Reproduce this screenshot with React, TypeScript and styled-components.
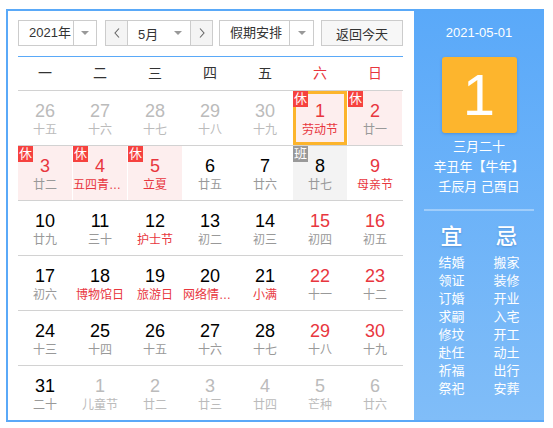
import React from "react";
import styled, { createGlobalStyle, css } from "styled-components";

const RED = "#e8363e";
const GRAY_TEXT = "#999";
const OTHER = "#bbb";

const GlobalStyle = createGlobalStyle`
  html, body { margin: 0; padding: 0; background: #fff; }
  body { font-family: "Liberation Sans", "Noto Sans CJK SC", sans-serif; }
  * { box-sizing: border-box; }
`;

const Widget = styled.div`
  margin: 9px 0 0 6px;
  width: 538px;
  height: 413px;
  display: flex;
  border: 2px solid #5aa9f8;
  border-right: none;
`;

const LeftPanel = styled.div`
  width: 406px;
  padding: 9px 11px 0 10px;
  background: #fff;
`;

const Toolbar = styled.div`
  display: flex;
  height: 26px;
  margin-bottom: 10px;
`;

const Box = styled.div<{ $w: number; $ml?: number; $bg?: string }>`
  display: flex;
  width: ${(p) => p.$w}px;
  margin-left: ${(p) => p.$ml ?? 0}px;
  height: 26px;
  border: 1px solid #ccc;
  background: ${(p) => p.$bg ?? "#fff"};
  font-size: 13px;
  color: #333;
`;

const SelectText = styled.div`
  flex: 1;
  display: flex;
  align-items: center;
  padding-left: 10px;
  line-height: 24px;
  white-space: nowrap;
`;

const ArrowPart = styled.div<{ $w: number }>`
  width: ${(p) => p.$w}px;
  border-left: 1px solid #ccc;
  display: flex;
  align-items: center;
  justify-content: center;
`;

const Caret = styled.span`
  display: inline-block;
  width: 0;
  height: 0;
  border-left: 4px solid transparent;
  border-right: 4px solid transparent;
  border-top: 4px solid #999;
`;

const NavButton = styled.div<{ $side: "left" | "right" }>`
  width: 22px;
  display: flex;
  align-items: center;
  justify-content: center;
  background: #f4f4f4;
  ${(p) =>
    p.$side === "left"
      ? css`border-right: 1px solid #ccc;`
      : css`border-left: 1px solid #ccc;`}
`;

const MonthMid = styled.div`
  flex: 1;
  display: flex;
  align-items: center;
  justify-content: space-between;
  padding: 0 8px 0 10px;
  background: #fff;
`;

const ReturnButton = styled.div`
  width: 82px;
  margin-left: 7px;
  height: 26px;
  border: 1px solid #ccc;
  background: #f7f7f7;
  font-size: 13px;
  color: #333;
  display: flex;
  align-items: center;
  justify-content: center;
`;

const WeekHeader = styled.div`
  display: grid;
  grid-template-columns: repeat(7, 54px);
  column-gap: 1px;
  border-top: 1px solid #5aa9f8;
  height: 34px;
`;

const HeaderCell = styled.div<{ $red?: boolean }>`
  text-align: center;
  font-size: 14px;
  line-height: 33px;
  color: ${(p) => (p.$red ? RED : "#333")};
`;

const Row = styled.div`
  display: grid;
  grid-template-columns: repeat(7, 54px);
  column-gap: 1px;
  border-top: 1px solid #d2d2d2;
  height: 55px;
`;

const Cell = styled.div<{ $bg?: string; $selected?: boolean }>`
  position: relative;
  height: 54px;
  padding-top: 10px;
  text-align: center;
  background: ${(p) => p.$bg ?? "transparent"};
  ${(p) =>
    p.$selected &&
    css`
      box-shadow: inset 0 0 0 3px #fcb42c;
    `}
`;

const Badge = styled.span<{ $type: "rest" | "work" }>`
  position: absolute;
  top: 0;
  left: 0;
  width: 15px;
  height: 16px;
  font-size: 13px;
  line-height: 16px;
  text-align: center;
  color: #fff;
  background: ${(p) => (p.$type === "rest" ? "#f6423f" : "#999")};
`;

const DayNum = styled.div<{ $color: string }>`
  font-size: 18px;
  line-height: 20px;
  color: ${(p) => p.$color};
`;

const Lunar = styled.div<{ $color: string }>`
  font-size: 12px;
  line-height: 18px;
  color: ${(p) => p.$color};
  white-space: nowrap;
  overflow: hidden;
  text-overflow: ellipsis;
`;

const RightPanel = styled.div`
  width: 130px;
  background: linear-gradient(to bottom, #5aa9f9, #80bdf8);
  color: #fff;
  display: flex;
  flex-direction: column;
  align-items: center;
  padding-top: 12px;
`;

const DateLine = styled.div`
  font-size: 13px;
  line-height: 20px;
`;

const BigDay = styled.div`
  margin-top: 14px;
  width: 75px;
  height: 76px;
  border-radius: 3px;
  background: #fdb52d;
  box-shadow: 0 1px 3px rgba(0, 60, 140, 0.25);
  display: flex;
  align-items: center;
  justify-content: center;
  font-size: 58px;
  line-height: 1;
`;

const LunarInfo = styled.div`
  margin-top: 4px;
  font-size: 13px;
  line-height: 20px;
  text-align: center;
`;

const Divider = styled.div`
  margin-top: 12px;
  width: 110px;
  height: 2px;
  background: rgba(255, 255, 255, 0.35);
`;

const YiJi = styled.div`
  margin-top: 11px;
  display: grid;
  grid-template-columns: 55px 55px;
`;

const YiJiCol = styled.div`
  display: flex;
  flex-direction: column;
  align-items: center;
`;

const YiJiTitle = styled.div`
  font-size: 22px;
  line-height: 30px;
  font-weight: 500;
  margin-bottom: 2px;
  text-shadow: 0 1px 2px rgba(0, 50, 120, 0.25);
`;

const YiJiItem = styled.div`
  font-size: 13px;
  line-height: 18px;
`;

type Day = {
  d: number;
  l: string;
  other?: boolean;
  fest?: boolean;
  badge?: "rest" | "work";
  selected?: boolean;
};

const days: Day[] = [
  { d: 26, l: "十五", other: true },
  { d: 27, l: "十六", other: true },
  { d: 28, l: "十七", other: true },
  { d: 29, l: "十八", other: true },
  { d: 30, l: "十九", other: true },
  { d: 1, l: "劳动节", fest: true, badge: "rest", selected: true },
  { d: 2, l: "廿一", badge: "rest" },
  { d: 3, l: "廿二", badge: "rest" },
  { d: 4, l: "五四青年节", fest: true, badge: "rest" },
  { d: 5, l: "立夏", fest: true, badge: "rest" },
  { d: 6, l: "廿五" },
  { d: 7, l: "廿六" },
  { d: 8, l: "廿七", badge: "work" },
  { d: 9, l: "母亲节", fest: true },
  { d: 10, l: "廿九" },
  { d: 11, l: "三十" },
  { d: 12, l: "护士节", fest: true },
  { d: 13, l: "初二" },
  { d: 14, l: "初三" },
  { d: 15, l: "初四" },
  { d: 16, l: "初五" },
  { d: 17, l: "初六" },
  { d: 18, l: "博物馆日", fest: true },
  { d: 19, l: "旅游日", fest: true },
  { d: 20, l: "网络情人节", fest: true },
  { d: 21, l: "小满", fest: true },
  { d: 22, l: "十一" },
  { d: 23, l: "十二" },
  { d: 24, l: "十三" },
  { d: 25, l: "十四" },
  { d: 26, l: "十五" },
  { d: 27, l: "十六" },
  { d: 28, l: "十七" },
  { d: 29, l: "十八" },
  { d: 30, l: "十九" },
  { d: 31, l: "二十" },
  { d: 1, l: "儿童节", other: true },
  { d: 2, l: "廿二", other: true },
  { d: 3, l: "廿三", other: true },
  { d: 4, l: "廿四", other: true },
  { d: 5, l: "芒种", other: true },
  { d: 6, l: "廿六", other: true },
];

const weekNames = ["一", "二", "三", "四", "五", "六", "日"];
const yi = ["结婚", "领证", "订婚", "求嗣", "修坟", "赴任", "祈福", "祭祀"];
const ji = ["搬家", "装修", "开业", "入宅", "开工", "动土", "出行", "安葬"];

const Chevron = ({ dir }: { dir: "l" | "r" }) => (
  <svg width="6" height="10" viewBox="0 0 6 10">
    <polyline
      points={dir === "l" ? "5,0.5 1,5 5,9.5" : "1,0.5 5,5 1,9.5"}
      fill="none"
      stroke="#666"
      strokeWidth="1.1"
    />
  </svg>
);

export default function App() {
  const rows: Day[][] = [];
  for (let i = 0; i < days.length; i += 7) rows.push(days.slice(i, i + 7));

  return (
    <>
      <GlobalStyle />
      <Widget>
        <LeftPanel>
          <Toolbar>
            <Box $w={79}>
              <SelectText>2021年</SelectText>
              <ArrowPart $w={23}>
                <Caret />
              </ArrowPart>
            </Box>
            <Box $w={108} $ml={8}>
              <NavButton $side="left">
                <Chevron dir="l" />
              </NavButton>
              <MonthMid>
                <span>5月</span>
                <Caret />
              </MonthMid>
              <NavButton $side="right">
                <Chevron dir="r" />
              </NavButton>
            </Box>
            <Box $w={95} $ml={6}>
              <SelectText>假期安排</SelectText>
              <ArrowPart $w={24}>
                <Caret />
              </ArrowPart>
            </Box>
            <ReturnButton>返回今天</ReturnButton>
          </Toolbar>
          <WeekHeader>
            {weekNames.map((w, i) => (
              <HeaderCell key={w} $red={i >= 5}>
                {w}
              </HeaderCell>
            ))}
          </WeekHeader>
          {rows.map((row, ri) => (
            <Row key={ri}>
              {row.map((day, ci) => {
                const weekend = ci >= 5;
                let numColor = "#000";
                if (day.other) numColor = OTHER;
                else if (day.badge === "work") numColor = "#000";
                else if (weekend || day.badge === "rest") numColor = RED;
                let lunarColor = GRAY_TEXT;
                if (day.other) lunarColor = OTHER;
                else if (day.fest) lunarColor = RED;
                const bg =
                  day.badge === "rest"
                    ? "#fdeeee"
                    : day.badge === "work"
                    ? "#f3f3f3"
                    : undefined;
                return (
                  <Cell key={ci} $bg={bg} $selected={day.selected}>
                    {day.badge && (
                      <Badge $type={day.badge}>
                        {day.badge === "rest" ? "休" : "班"}
                      </Badge>
                    )}
                    <DayNum $color={numColor}>{day.d}</DayNum>
                    <Lunar $color={lunarColor}>{day.l}</Lunar>
                  </Cell>
                );
              })}
            </Row>
          ))}
        </LeftPanel>
        <RightPanel>
          <DateLine>2021-05-01</DateLine>
          <BigDay>1</BigDay>
          <LunarInfo>
            三月二十
            <br />
            辛丑年【牛年】
            <br />
            壬辰月 己酉日
          </LunarInfo>
          <Divider />
          <YiJi>
            <YiJiCol>
              <YiJiTitle>宜</YiJiTitle>
              {yi.map((t) => (
                <YiJiItem key={t}>{t}</YiJiItem>
              ))}
            </YiJiCol>
            <YiJiCol>
              <YiJiTitle>忌</YiJiTitle>
              {ji.map((t) => (
                <YiJiItem key={t}>{t}</YiJiItem>
              ))}
            </YiJiCol>
          </YiJi>
        </RightPanel>
      </Widget>
    </>
  );
}
